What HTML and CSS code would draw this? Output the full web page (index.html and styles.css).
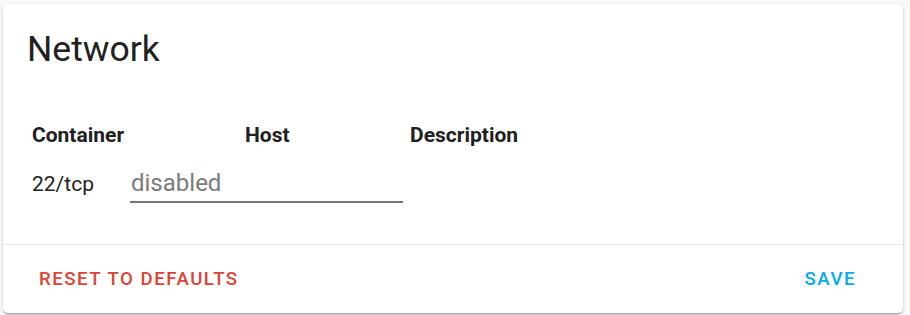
FILE: index.html
```html
<!DOCTYPE html>
<html>
<head>
<meta charset="utf-8">
<link rel="stylesheet" href="styles.css">
</head>
<body>
<div class="card">
  <div class="card-header">Network</div>
  <div class="card-content">
    <div class="ports-head">
      <div class="th">Container</div>
      <div class="th">Host</div>
      <div class="th">Description</div>
    </div>
    <div class="ports-row">
      <div class="port">22/tcp</div>
      <div class="field"><span class="placeholder">disabled</span></div>
    </div>
  </div>
  <div class="card-actions">
    <button class="btn btn-reset">Reset to defaults</button>
    <button class="btn btn-save">Save</button>
  </div>
</div>
</body>
</html>
```
FILE: styles.css
```css
html, body {
  margin: 0;
  padding: 0;
  background: #fafafa;
}
body {
  padding: 4px 7px 2px 3px;
  font-family: Roboto, "Liberation Sans", sans-serif;
  color: #212121;
}
.card {
  background: #fff;
  border-radius: 5px;
  box-shadow: 0 2px 2px 0 rgba(0,0,0,0.14), 0 1px 5px 0 rgba(0,0,0,0.12), 0 3px 1px -2px rgba(0,0,0,0.2);
  height: 309px;
  display: flex;
  flex-direction: column;
}
.card-header {
  font-size: 35.5px;
  line-height: 44px;
  padding: 23px 21px 0 24px;
  height: 68px;
  box-sizing: border-box;
}
.card-content {
  padding: 0 21px 0 29px;
  flex: 1;
}
.ports-head {
  display: grid;
  grid-template-columns: 213px 165px auto;
  margin-top: 49px;
}
.th {
  font-weight: 700;
  font-size: 21px;
  line-height: 28px;
}
.ports-row {
  display: flex;
  align-items: baseline;
  margin-top: 20px;
}
.port {
  width: 98px;
  font-size: 21px;
  line-height: 28px;
}
.field {
  width: 273px;
  border-bottom: 2px solid #757575;
  padding-bottom: 4px;
}
.placeholder {
  display: block;
  font-size: 24px;
  line-height: 28px;
  color: #7a7a7a;
  padding-left: 1px;
}
.card-actions {
  border-top: 1px solid #e8e8e8;
  height: 68px;
  display: flex;
  justify-content: space-between;
  align-items: center;
  padding: 0 37px 0 26px;
}
.btn {
  background: none;
  border: none;
  font-family: Roboto, "Liberation Sans", sans-serif;
  font-weight: 500;
  font-size: 18.67px;
  letter-spacing: 1.5px;
  text-transform: uppercase;
  padding: 8px 10px;
}
.btn-reset { color: #db4437; }
.btn-save { color: #03a9f4; }
```
